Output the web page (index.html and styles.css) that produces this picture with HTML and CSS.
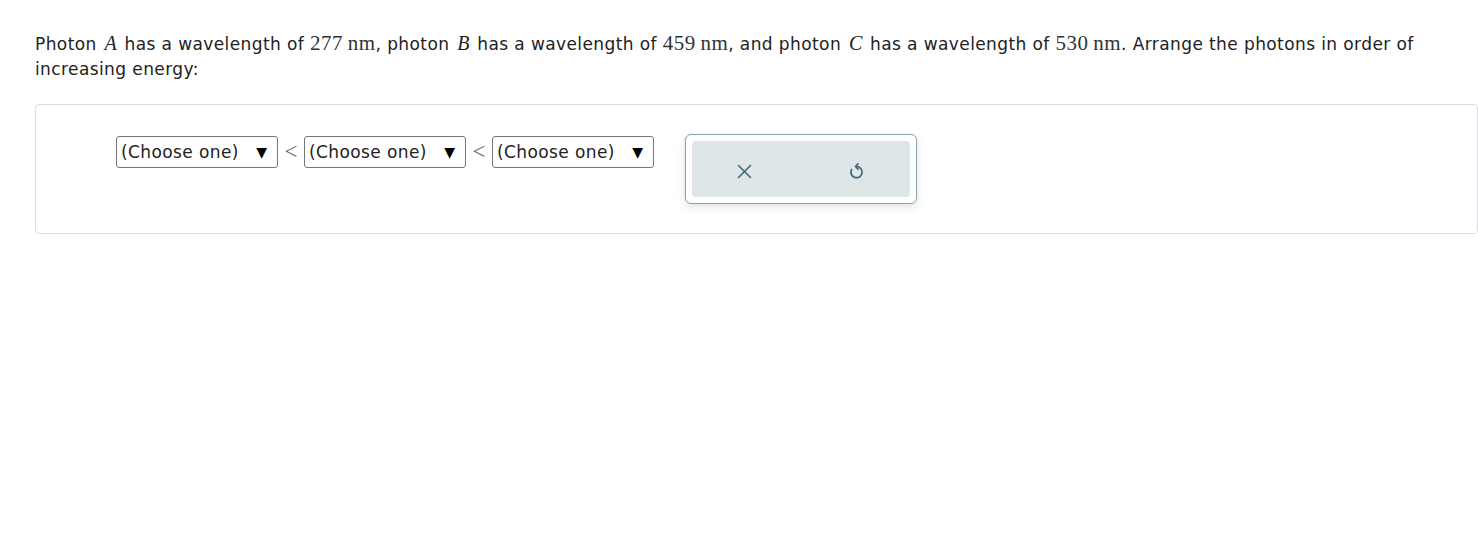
FILE: index.html
```html
<!DOCTYPE html>
<html>
<head>
<meta charset="utf-8">
<link rel="stylesheet" href="styles.css">
</head>
<body>
<div class="page">
  <p class="question">Photon <span class="mi">A</span> has a wavelength of <span class="mn">277&thinsp;nm</span>, photon <span class="mi">B</span> has a wavelength of <span class="mn">459&thinsp;nm</span>, and photon <span class="mi">C</span> has a wavelength of <span class="mn">530&thinsp;nm</span>. Arrange the photons in order of increasing energy:</p>
  <div class="answer-box">
    <div class="chain">
      <div class="choose"><span class="choose-text">(Choose one)</span><span class="arrow">▼</span></div>
      <span class="lt">&lt;</span>
      <div class="choose"><span class="choose-text">(Choose one)</span><span class="arrow">▼</span></div>
      <span class="lt">&lt;</span>
      <div class="choose"><span class="choose-text">(Choose one)</span><span class="arrow">▼</span></div>
    </div>
    <div class="tools">
      <div class="tools-inner">
        <div class="tool tool-clear">
          <svg width="15" height="15" viewBox="0 0 15 15"><path d="M1.5 1.5 L13.5 13.5 M13.5 1.5 L1.5 13.5" stroke="#3e6878" stroke-width="1.6" fill="none" stroke-linecap="round"/></svg>
        </div>
        <div class="tool">
          <svg width="16" height="18" viewBox="0 0 16 18"><path d="M7.5 4.5 A5.6 5.6 0 1 1 2.6 7.4" stroke="#3e6878" stroke-width="1.7" fill="none" stroke-linecap="round"/><path d="M9 1.8 L6.5 4.5 L9 7.2" stroke="#3e6878" stroke-width="1.7" fill="none" stroke-linecap="round" stroke-linejoin="round"/></svg>
        </div>
      </div>
    </div>
  </div>
</div>
</body>
</html>
```
FILE: styles.css
```css
html, body {
  margin: 0;
  padding: 0;
  background: #ffffff;
}
.page {
  padding: 31px 0 0 35px;
  font-family: "DejaVu Sans", Verdana, sans-serif;
  font-size: 17px;
  letter-spacing: 0.4px;
  color: #222222;
}
.question {
  margin: 0;
  line-height: 25px;
}
.mi {
  font-family: "Liberation Serif", "Times New Roman", serif;
  font-style: italic;
  font-size: 20px;
  letter-spacing: 0;
  margin: 0 2px;
}
.mn {
  font-family: "Liberation Serif", "Times New Roman", serif;
  font-size: 21px;
  letter-spacing: 0.5px;
  line-height: 20px;
  color: #333;
}
.answer-box {
  margin-top: 22px;
  height: 130px;
  box-sizing: border-box;
  border: 1px solid #d9dfe0;
  border-radius: 4px;
  display: flex;
  align-items: flex-start;
  padding: 29px 0 0 80px;
}
.chain {
  display: flex;
  align-items: center;
  margin-top: 2px;
}
.choose {
  width: 162px;
  height: 32px;
  box-sizing: border-box;
  border: 1px solid #767676;
  border-radius: 3px;
  display: flex;
  align-items: center;
  justify-content: space-between;
  padding: 0 10px 0 4px;
  color: #222;
  font-size: 17px;
  letter-spacing: 0.4px;
}
.arrow {
  font-size: 14px;
  color: #000;
  letter-spacing: 0;
}
.lt {
  font-family: "Liberation Serif", "Times New Roman", serif;
  font-size: 23px;
  color: #666;
  width: 26px;
  text-align: center;
  letter-spacing: 0;
}
.tools {
  margin-left: 31px;
  width: 232px;
  height: 70px;
  box-sizing: border-box;
  border: 1px solid #86a3ad;
  border-radius: 6px;
  background: #fff;
  padding: 6px;
  box-shadow: 0 3px 8px rgba(0,0,0,0.12);
}
.tools-inner {
  height: 100%;
  background: #dfe6e8;
  border-radius: 4px;
  display: flex;
}
.tool {
  flex: 1;
  display: flex;
  align-items: center;
  justify-content: center;
  padding-top: 4px;
}
.tool-clear {
  padding-right: 7px;
}
```
